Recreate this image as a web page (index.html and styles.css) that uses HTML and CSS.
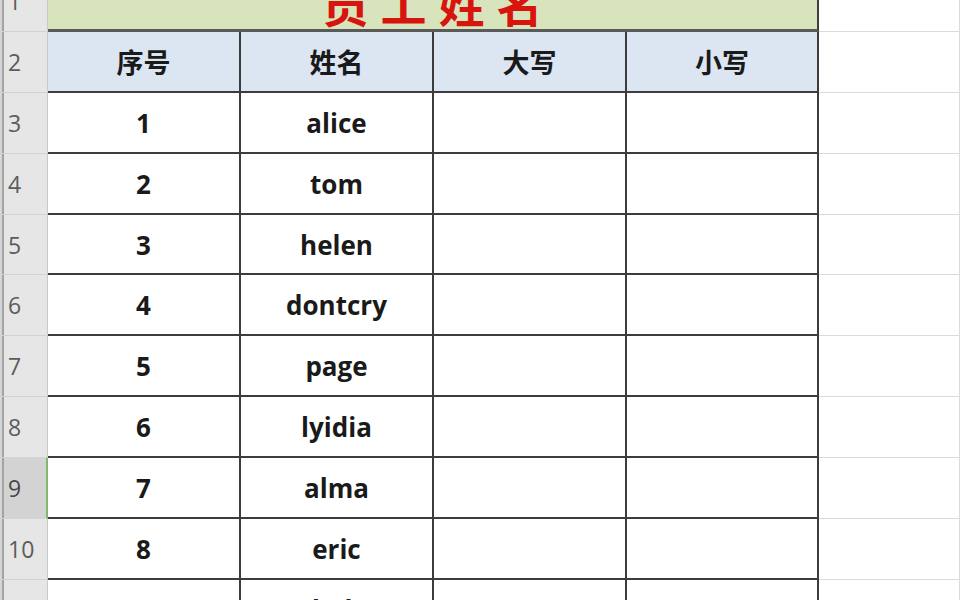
FILE: index.html
```html
<!DOCTYPE html>
<html lang="zh">
<head>
<meta charset="utf-8">
<title>员工姓名</title>
<link rel="stylesheet" href="styles.css">
</head>
<body>
<div class="sheet">
  <div class="rh">1</div>
  <div class="title">员工姓名</div>
  <div class="ext"></div>

  <div class="rh">2</div>
  <div class="hd">序号</div>
  <div class="hd">姓名</div>
  <div class="hd">大写</div>
  <div class="hd">小写</div>
  <div class="ext"></div>

  <div class="rh">3</div><div class="c">1</div><div class="c">alice</div><div class="c"></div><div class="c"></div><div class="ext"></div>
  <div class="rh">4</div><div class="c">2</div><div class="c">tom</div><div class="c"></div><div class="c"></div><div class="ext"></div>
  <div class="rh">5</div><div class="c">3</div><div class="c">helen</div><div class="c"></div><div class="c"></div><div class="ext"></div>
  <div class="rh">6</div><div class="c">4</div><div class="c">dontcry</div><div class="c"></div><div class="c"></div><div class="ext"></div>
  <div class="rh">7</div><div class="c">5</div><div class="c">page</div><div class="c"></div><div class="c"></div><div class="ext"></div>
  <div class="rh">8</div><div class="c">6</div><div class="c">lyidia</div><div class="c"></div><div class="c"></div><div class="ext"></div>
  <div class="rh sel">9</div><div class="c">7</div><div class="c">alma</div><div class="c"></div><div class="c"></div><div class="ext"></div>
  <div class="rh">10</div><div class="c">8</div><div class="c">eric</div><div class="c"></div><div class="c"></div><div class="ext"></div>
  <div class="rh">11</div><div class="c">9</div><div class="c">bob</div><div class="c"></div><div class="c"></div><div class="ext"></div>
</div>
</body>
</html>
```

FILE: styles.css
```css
html, body {
  margin: 0;
  padding: 0;
  background: #ffffff;
  overflow: hidden;
}

.sheet {
  display: grid;
  grid-template-columns: 48px 193px 193px 193px 192px 141px;
  grid-auto-rows: 60.9px;
  margin-top: -29px;
  font-family: "Open Sans", "Noto Sans CJK SC", sans-serif;
}

.rh {
  background: #e6e6e6;
  box-shadow: inset 2px 0 #d6d6d6, inset 4px 0 #a4a4a4;
  border-right: 1px solid #c9c9c9;
  border-bottom: 1px solid #d2d2d2;
  color: #5c5c5c;
  font-size: 23px;
  padding-left: 8px;
  display: flex;
  align-items: center;
}

.rh.sel {
  background: #d3d3d3;
  color: #474747;
  border-right: 2px solid #7dbb6a;
}

.title {
  grid-column: span 4;
  background: #d8e4bc;
  border-right: 2px solid #3e3e3e;
  border-bottom: 3px solid #5a5a5a;
  color: #d8140f;
  font-family: "Noto Sans CJK SC", sans-serif;
  font-weight: 700;
  font-size: 46px;
  letter-spacing: 12px;
  text-indent: 12px;
  display: flex;
  align-items: center;
  justify-content: center;
  line-height: 1;
  padding-top: 5px;
  box-sizing: border-box;
}

.hd, .c {
  border-right: 2px solid #3c3c3c;
  border-bottom: 2px solid #3c3c3c;
  display: flex;
  align-items: center;
  justify-content: center;
  font-weight: 700;
  color: #1a1a1a;
}

.hd {
  background: #dce6f2;
  font-family: "Noto Sans CJK SC", sans-serif;
  font-size: 27px;
}

.c {
  font-size: 26px;
  padding-top: 1px;
}

.ext {
  border-right: 1px solid #dadada;
  border-bottom: 1px solid #dadada;
}
```
